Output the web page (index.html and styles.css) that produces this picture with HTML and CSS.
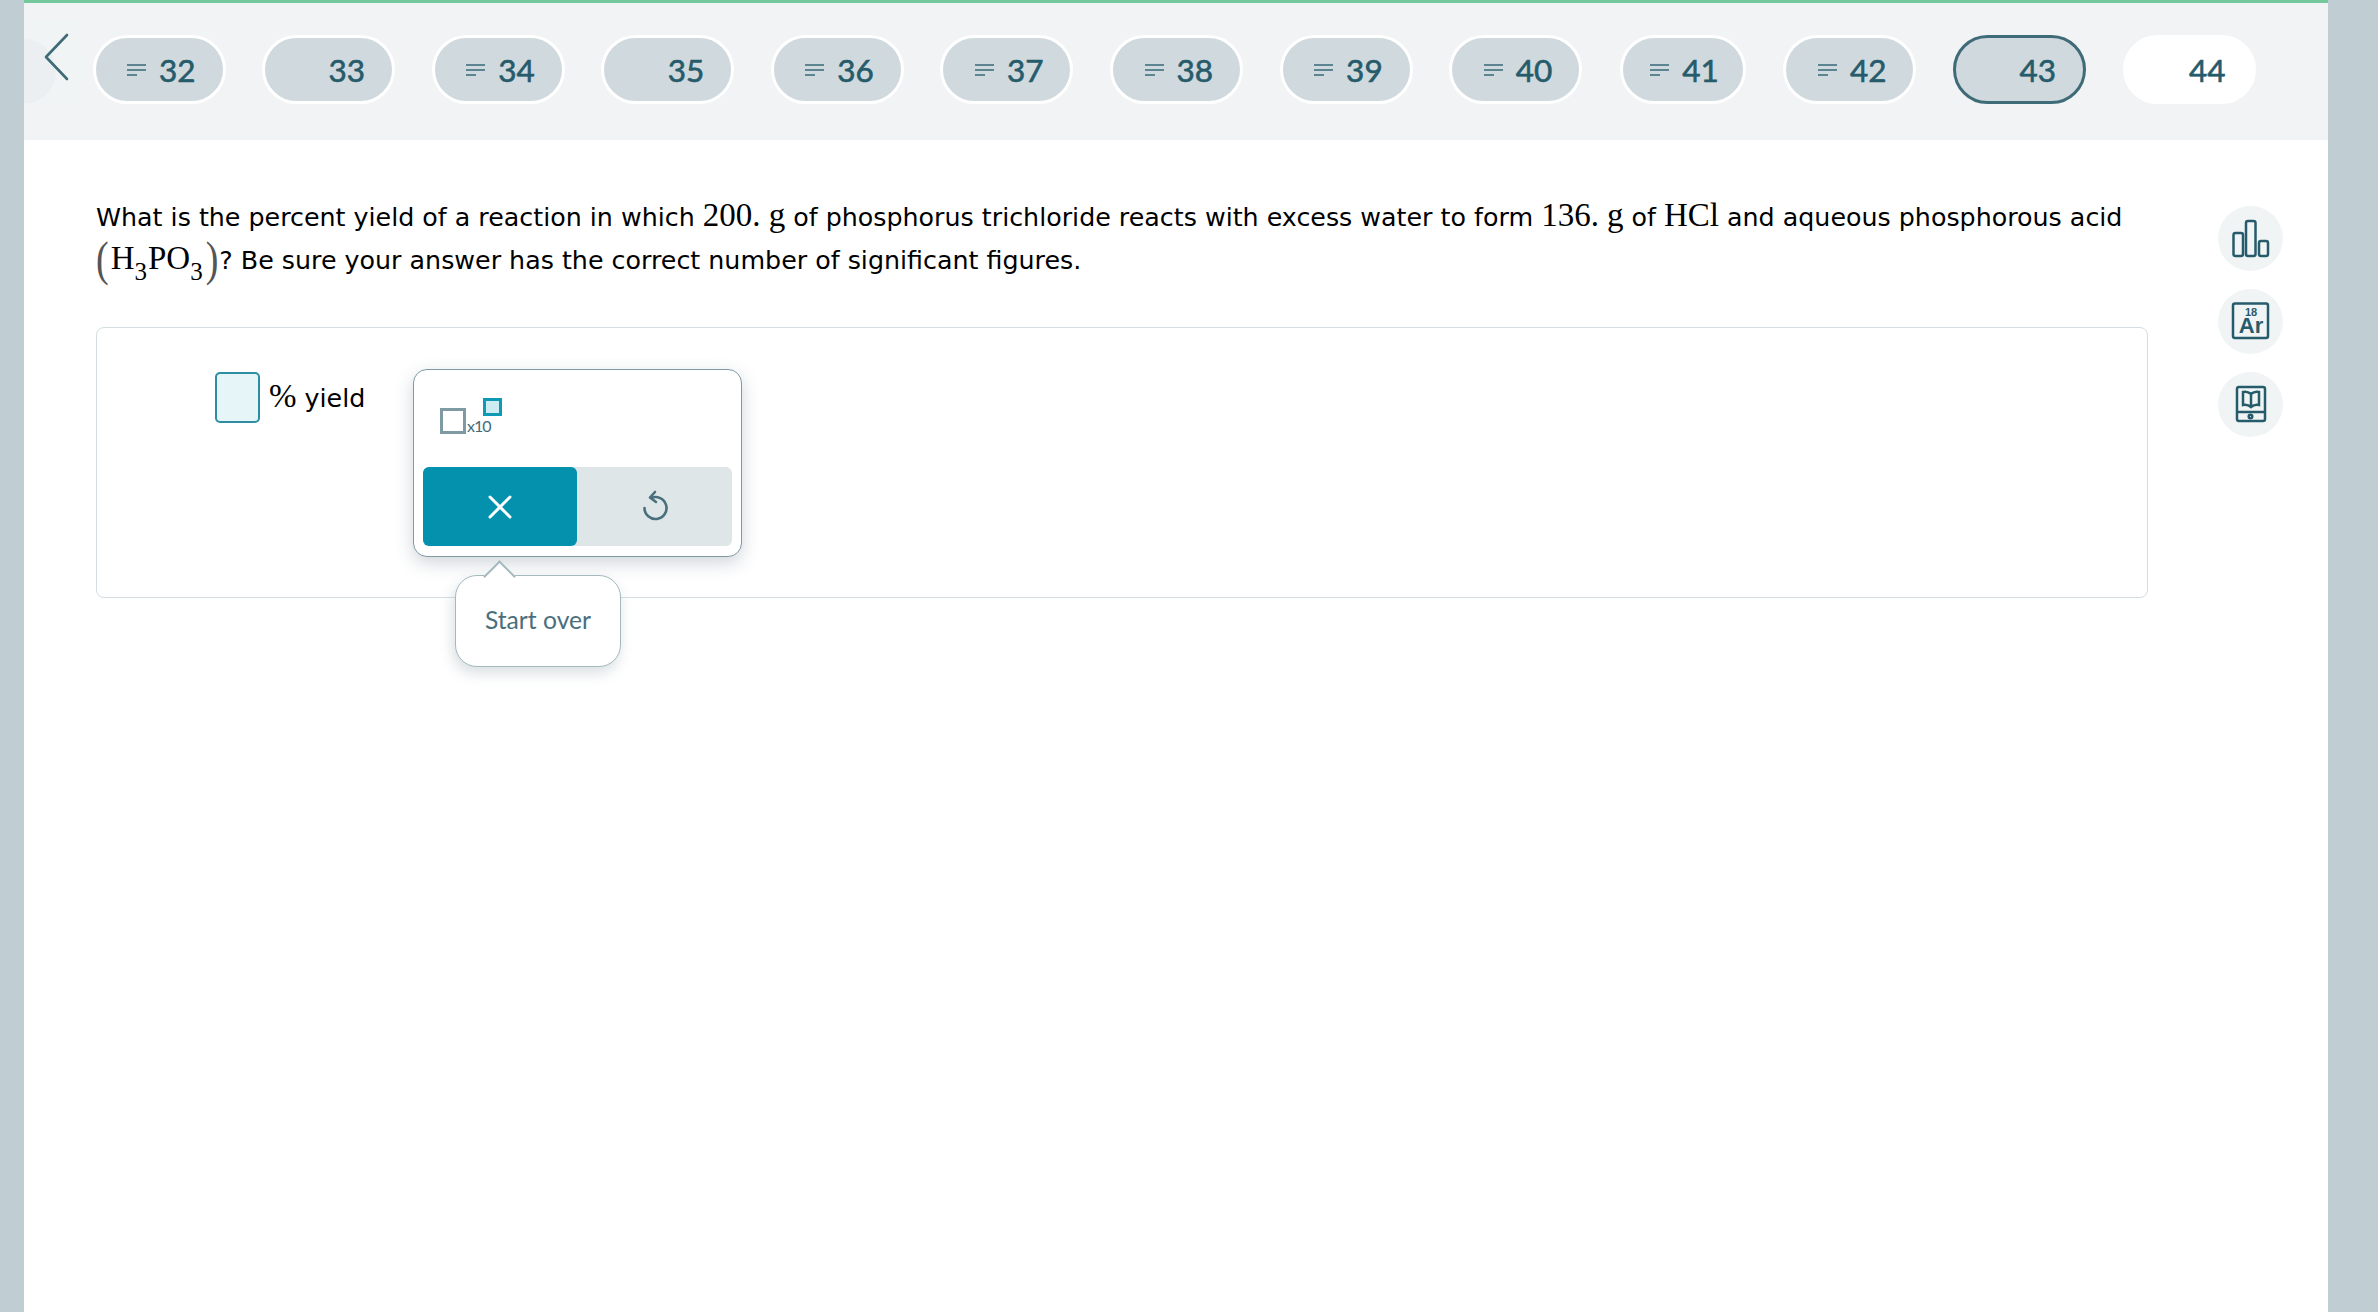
FILE: index.html
```html
<!DOCTYPE html>
<html lang="en">
<head>
<meta charset="utf-8">
<title>Question 43</title>
<link rel="stylesheet" href="styles.css">
</head>
<body>
<div class="page">
  <header class="topbar">
    <button class="back" aria-label="Previous">
      <svg class="back-icon" width="30" height="50" viewBox="0 0 30 50"><path d="M24 3 L3 25 L24 47"/></svg>
    </button>
    <nav class="pills">
      <a class="pill answered"><svg class="lines" width="19" height="12" viewBox="0 0 19 12"><path d="M0 1H19M0 6H19M0 11H10"/></svg>32</a>
      <a class="pill">33</a>
      <a class="pill answered"><svg class="lines" width="19" height="12" viewBox="0 0 19 12"><path d="M0 1H19M0 6H19M0 11H10"/></svg>34</a>
      <a class="pill">35</a>
      <a class="pill answered"><svg class="lines" width="19" height="12" viewBox="0 0 19 12"><path d="M0 1H19M0 6H19M0 11H10"/></svg>36</a>
      <a class="pill answered"><svg class="lines" width="19" height="12" viewBox="0 0 19 12"><path d="M0 1H19M0 6H19M0 11H10"/></svg>37</a>
      <a class="pill answered"><svg class="lines" width="19" height="12" viewBox="0 0 19 12"><path d="M0 1H19M0 6H19M0 11H10"/></svg>38</a>
      <a class="pill answered"><svg class="lines" width="19" height="12" viewBox="0 0 19 12"><path d="M0 1H19M0 6H19M0 11H10"/></svg>39</a>
      <a class="pill answered"><svg class="lines" width="19" height="12" viewBox="0 0 19 12"><path d="M0 1H19M0 6H19M0 11H10"/></svg>40</a>
      <a class="pill answered narrow"><svg class="lines" width="19" height="12" viewBox="0 0 19 12"><path d="M0 1H19M0 6H19M0 11H10"/></svg>41</a>
      <a class="pill answered"><svg class="lines" width="19" height="12" viewBox="0 0 19 12"><path d="M0 1H19M0 6H19M0 11H10"/></svg>42</a>
      <a class="pill current">43</a>
      <a class="pill upcoming">44</a>
    </nav>
  </header>
  <main class="content">
    <section class="work">
      <p class="question">What is the percent yield of a reaction in which <span class="m">200.</span> <span class="m">g</span> of phosphorus trichloride reacts with excess water to form <span class="m">136.</span> <span class="m">g</span> of <span class="m">HCl</span> and aqueous phosphorous acid<br><span class="m formula"><span class="paren">(</span>H<sub>3</sub>PO<sub>3</sub><span class="paren">)</span></span>? Be sure your answer has the correct number of significant figures.</p>
      <div class="answer">
        <div class="field">
          <span class="input"></span>
          <span class="unit"><span class="m">%</span> yield</span>
        </div>
        <div class="palette">
          <div class="sci">
            <span class="sci-box"></span>
            <span class="sci-x">x10</span>
            <span class="sci-exp"></span>
          </div>
          <div class="actions">
            <button class="act clear" aria-label="Clear">
              <svg width="24" height="24" viewBox="0 0 24 24"><path d="M2 2 L22 22 M22 2 L2 22"/></svg>
            </button>
            <button class="act undo" aria-label="Start over">
              <svg width="28" height="36" viewBox="0 0 28 36"><path d="M14 3 L9 8.500 L15 13"/><path d="M10 9 A11 11 0 1 1 3.500 19"/></svg>
            </button>
          </div>
        </div>
        <div class="tip">Start over</div>
      </div>
    </section>
    <aside class="tools">
      <button class="tool" aria-label="Data">
        <svg width="65" height="65" viewBox="0 0 65 65"><rect x="15.500" y="27" width="9.500" height="23" rx="2"/><rect x="28" y="15" width="9.500" height="35" rx="2"/><rect x="41" y="35" width="9" height="15" rx="2"/></svg>
      </button>
      <button class="tool" aria-label="Periodic table">
        <svg width="65" height="65" viewBox="0 0 65 65"><rect x="15" y="14.500" width="35" height="34.500" rx="2"/><text class="t18" x="33" y="27">18</text><text class="tar" x="33" y="44">Ar</text></svg>
      </button>
      <button class="tool" aria-label="Textbook">
        <svg width="65" height="65" viewBox="0 0 65 65"><rect x="19" y="15" width="28" height="34" rx="2"/><path d="M19 40H47"/><circle cx="32.500" cy="44.500" r="1.800"/><path d="M25 20 Q29.500 19 33 22 Q36.500 19 41 20 V33 Q36.500 32 33 35 Q29.500 32 25 33 Z M33 22 V35"/></svg>
      </button>
    </aside>
  </main>
</div>
</body>
</html>
```

FILE: styles.css
```css
* { box-sizing: border-box; }
html, body { margin: 0; height: 100%; }
body {
  background: #c0cdd3;
  padding: 0 50px 0 24px;
  overflow: hidden;
}
.page {
  background: #fff;
  height: 1312px;
  display: flex;
  flex-direction: column;
}
.topbar {
  position: relative;
  height: 140px;
  flex: none;
  background: #f1f3f5;
  border-top: 3px solid #75c89c;
  padding: 32px 0 0 68.500px;
}
.back {
  position: absolute;
  left: 0;
  top: 17px;
  width: 65px;
  height: 83px;
  padding: 0;
  border: 0;
  background: #f0f4f5;
  overflow: hidden;
}
.back::before {
  content: "";
  position: absolute;
  left: -35px;
  top: 17px;
  width: 65px;
  height: 65px;
  border-radius: 50%;
  background: #ebeff1;
  border: 2px solid #f1f4f5;
}
.back-icon {
  position: absolute;
  left: 19px;
  top: 12px;
}
.back-icon path {
  fill: none;
  stroke: #3f6b78;
  stroke-width: 2.600;
  stroke-linecap: round;
  stroke-linejoin: round;
}
.pills {
  display: flex;
  gap: 36.600px;
}
.pill {
  width: 133px;
  height: 69px;
  flex: none;
  display: flex;
  align-items: center;
  justify-content: flex-end;
  gap: 13px;
  padding-right: 27px;
  border-radius: 34.500px;
  border: 3px solid #fff;
  background: #d0d9dd;
  font-family: Lato, "Open Sans", sans-serif;
  font-weight: 400;
  -webkit-text-stroke: 0.6px #265b6b;
  font-size: 31.500px;
  color: #265b6b;
}
.pill.narrow { width: 125.500px; margin: 0 1px 0 1.500px; padding-right: 24px; }
.pill.current { border-color: #3f6b78; }
.pill.upcoming { background: #fff; }
.lines path {
  fill: none;
  stroke: #5c8491;
  stroke-width: 2;
}
.content {
  flex: 1;
  display: flex;
  padding: 66px 0 0 72px;
}
.work { width: 2052px; flex: none; }
.question {
  margin: -10px 0 0;
  font-family: "DejaVu Sans", Verdana, sans-serif;
  font-size: 25.330px;
  line-height: 43px;
  color: #000;
  white-space: nowrap;
}
.m {
  font-family: "Liberation Serif", "Times New Roman", serif;
  font-size: 33px;
  line-height: 0;
}
.formula sub {
  font-size: 25px;
  line-height: 0;
  vertical-align: -11px;
  margin-right: 1px;
}
.formula .paren:first-child { margin-right: 2px; }
.formula .paren:last-child { margin-left: 2px; margin-right: 1px; }
.paren {
  display: inline-block;
  font-size: 38px;
  line-height: 0;
  color: #555;
  transform: scale(1, 1.3);
  transform-origin: 50% -7px;
}
.answer {
  position: relative;
  height: 271px;
  margin-top: 45px;
  border: 1px solid #d3dee2;
  border-radius: 8px;
  padding: 44px 0 0 118px;
}
.field {
  display: flex;
  align-items: flex-start;
  gap: 9px;
}
.input {
  width: 45px;
  height: 51px;
  background: #e6f5f8;
  border: 2px solid #2d8ea3;
  border-radius: 5px;
}
.unit {
  font-family: "DejaVu Sans", Verdana, sans-serif;
  font-size: 25.330px;
  line-height: 51px;
  color: #000;
  padding-top: 1px;
}
.palette {
  position: absolute;
  left: 316px;
  top: 41px;
  width: 329px;
  height: 188px;
  background: #fff;
  border: 1px solid #7f9aa3;
  border-radius: 14px;
  box-shadow: 0 6px 18px rgba(40, 70, 85, 0.22);
  padding: 0 9px;
}
.sci {
  position: relative;
  height: 97px;
}
.sci-box {
  position: absolute;
  left: 17px;
  top: 38px;
  width: 26px;
  height: 26px;
  border: 3px solid #7f9aa3;
}
.sci-x {
  position: absolute;
  left: 44px;
  top: 46px;
  font-family: Lato, sans-serif;
  font-size: 16px;
  letter-spacing: -1px;
  line-height: 20px;
  color: #3f6b78;
}
.sci-exp {
  position: absolute;
  left: 60px;
  top: 28px;
  width: 19px;
  height: 18px;
  background: #cdedf3;
  border: 3px solid #0e9ab5;
}
.actions {
  display: flex;
  height: 79px;
  border-radius: 6px;
  background: #dfe6e8;
}
.act {
  flex: 1;
  padding: 0;
  border: 0;
  background: transparent;
  display: flex;
  align-items: center;
  justify-content: center;
  border-radius: 6px;
}
.act.clear { background: #0391ad; flex: none; width: 154px; }
.act svg { fill: none; }
.clear path { stroke: #fff; stroke-width: 3; stroke-linecap: round; }
.undo path {
  stroke: #4a6f7c;
  stroke-width: 2.600;
  stroke-linecap: round;
  stroke-linejoin: round;
}
.tip {
  position: absolute;
  left: 358px;
  top: 247px;
  width: 166px;
  height: 92px;
  padding-bottom: 3px;
  background: #fff;
  border: 1px solid #a4b9bf;
  border-radius: 22px;
  box-shadow: -2px 6px 14px rgba(40, 70, 85, 0.18);
  display: flex;
  align-items: center;
  justify-content: center;
  font-family: Lato, sans-serif;
  font-size: 24.700px;
  color: #4a6f7c;
}
.tip::before {
  content: "";
  position: absolute;
  left: 32px;
  top: -11px;
  width: 21px;
  height: 21px;
  background: #fff;
  border-left: 2px solid #a4b9bf;
  border-top: 2px solid #a4b9bf;
  transform: rotate(45deg);
}
.tools {
  display: flex;
  flex-direction: column;
  gap: 18px;
  margin-left: 70px;
}
.tool {
  width: 65px;
  height: 65px;
  padding: 0;
  border: 0;
  border-radius: 50%;
  background: #f0f4f5;
}
.tool svg {
  display: block;
  fill: none;
  stroke: #265b6b;
  stroke-width: 2.500;
}
.tool text {
  fill: #265b6b;
  stroke: none;
  font-family: "Liberation Sans", sans-serif;
  font-weight: 700;
  text-anchor: middle;
}
.t18 { font-size: 11px; }
.tar { font-size: 22px; }
```
